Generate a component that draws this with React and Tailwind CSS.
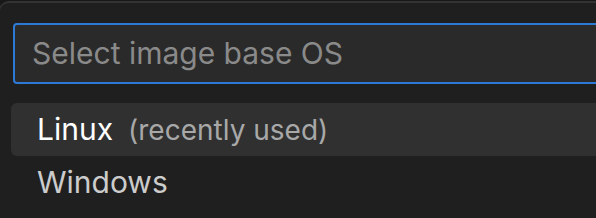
export default function App() {
  return (
    <div
      className="w-[596px] h-[218px] bg-[#181818] overflow-hidden"
      style={{ fontFamily: "Inter, 'Noto Sans', sans-serif" }}
    >
      <div className="w-[610px] h-[230px] -ml-px mt-px rounded-tl-[10px] border-t-2 border-l border-[#333333] bg-[#1f1f1f] pl-[13px] pt-[20px]">
        <div className="h-[61px] rounded-[4px] border-2 border-[#2d7ad6] bg-[#2a2a2a] flex items-center pl-[17px]">
          <span className="text-[30px] text-[#8a8a8a]">Select image base OS</span>
        </div>
        <div className="mt-[19px] -ml-[2px] flex flex-col">
          <div className="h-[53px] rounded-l-[6px] bg-[#303030] flex items-center pl-[26px]">
            <span className="text-[30px] text-white">Linux</span>
            <span className="text-[28px] text-[#a8a8a8] ml-[15px]">(recently used)</span>
          </div>
          <div className="h-[53px] flex items-center pl-[26px]">
            <span className="text-[30px] text-[#cccccc]">Windows</span>
          </div>
        </div>
      </div>
    </div>
  );
}
